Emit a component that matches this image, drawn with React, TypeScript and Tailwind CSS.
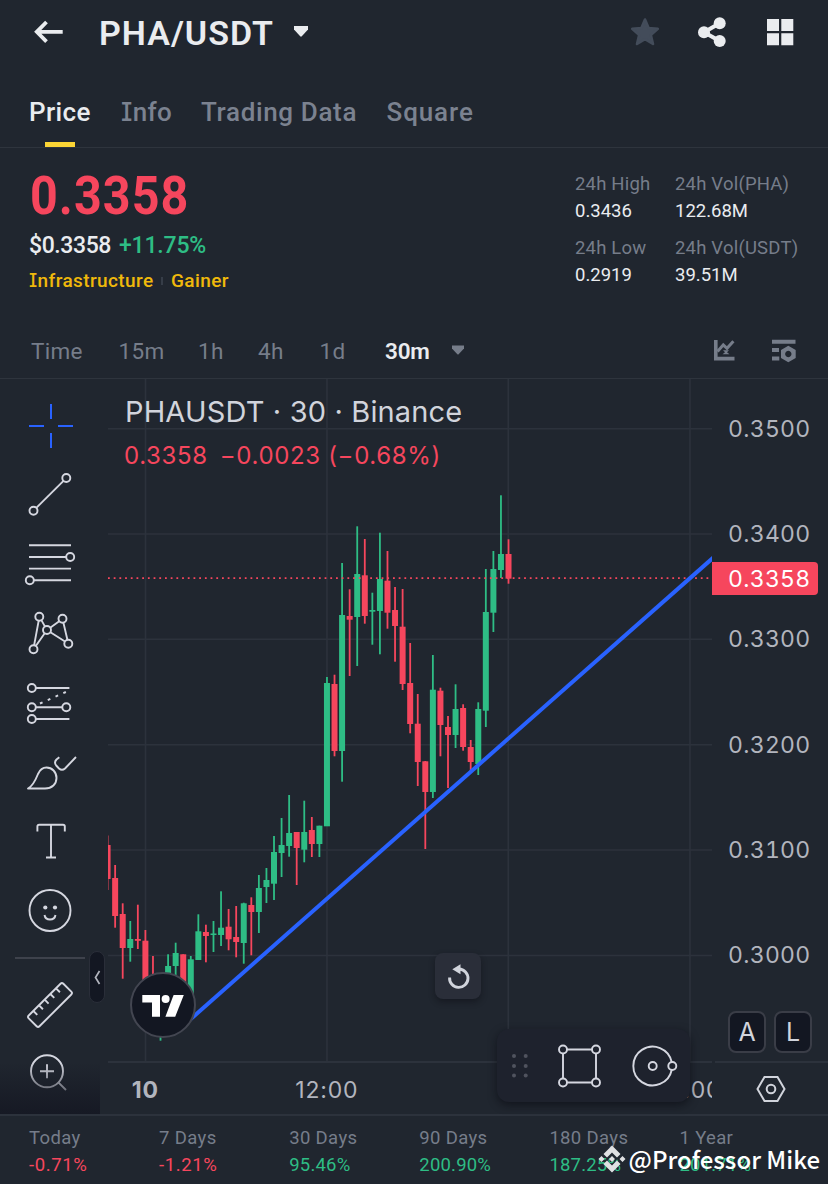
import React from "react";

type Candle = [up: 0 | 1, high: number, low: number, top: number, bottom: number];

const FIRST = -5;
const STEP = 7.565;
const CANDLES: Candle[] = [
  [0, 835.5, 890, 845, 879],
  [0, 865, 927.7, 878, 916],
  [0, 903.3, 978.7, 914, 948],
  [1, 921, 961.7, 939, 948],
  [0, 904.7, 949, 939, 940.8],
  [0, 930, 990, 940.7, 985],
  [0, 956, 1010, 985, 1000],
  [1, 995, 1040.7, 997, 1005],
  [1, 954.3, 1000, 966, 998],
  [1, 942.7, 975, 953, 966],
  [0, 954.3, 992, 954.3, 990],
  [1, 956, 994, 959.3, 994],
  [1, 914.3, 960, 931.3, 960],
  [0, 924.7, 962.3, 932, 936],
  [1, 921, 952, 933.5, 935],
  [1, 891.3, 946, 927.7, 935],
  [0, 909, 950.3, 926.7, 939.3],
  [0, 906, 957.3, 937, 942],
  [1, 902.7, 963.7, 903.3, 943],
  [0, 897.3, 955.3, 905, 912],
  [1, 875, 933, 888, 912],
  [1, 868, 903, 880, 887],
  [1, 836, 900, 852, 883.7],
  [1, 818, 877, 845, 853],
  [1, 795, 856.7, 833, 846],
  [0, 832, 885, 832, 848],
  [1, 800.7, 862.3, 832, 849.7],
  [0, 817, 857, 830, 844],
  [1, 825.7, 857, 825.7, 844],
  [1, 677, 826, 683, 826.3],
  [0, 674.7, 756.3, 684, 751],
  [1, 563, 781.7, 615, 751],
  [0, 589.3, 676, 616, 619.7],
  [1, 526.3, 666, 574, 617],
  [0, 539, 623.7, 575.3, 616],
  [1, 592.7, 644.7, 610, 611.7],
  [1, 532.7, 654.3, 579, 611],
  [0, 551, 628.7, 580.7, 612.7],
  [0, 587, 661.7, 610, 626],
  [0, 589, 690, 626.7, 684],
  [0, 643, 733.3, 683, 724],
  [0, 694, 786, 723.7, 762],
  [0, 761, 849, 761.3, 792],
  [1, 655, 798, 689.7, 792],
  [0, 687.7, 756.3, 690.7, 725],
  [0, 716, 788, 727, 735],
  [1, 684.3, 748, 709, 735],
  [0, 704.3, 750.7, 708, 747],
  [0, 740, 772, 747, 762],
  [1, 702.3, 775, 709, 764],
  [1, 569, 727, 612, 710.7],
  [1, 551, 632, 569, 612.7],
  [1, 495.3, 578, 554, 570],
  [0, 539.3, 583.7, 554, 578.7],
];

const GRID_Y = [428.7, 534, 639.3, 744.7, 850, 955.5];
const GRID_X = [145.5, 327, 508.3, 690];

const GREEN = "#2ebd85";
const RED = "#f6465d";

function CandleChart() {
  return (
    <svg width="604" height="682" viewBox="108 379 604 682" className="block">
      <g stroke="#2c323c" strokeWidth="1.6">
        {GRID_Y.map((y) => (
          <path key={y} d={`M108 ${y}H712`} />
        ))}
        {GRID_X.map((x) => (
          <path key={x} d={`M${x} 379V1061`} />
        ))}
      </g>
      {CANDLES.map(([up, high, low, top, bottom], i) => {
        const x = 145.4 + (FIRST + i) * STEP;
        const fill = up ? GREEN : RED;
        return (
          <g key={i} fill={fill}>
            <rect x={x - 0.9} y={high} width="1.8" height={low - high} />
            <rect x={x - 3} y={top} width="6" height={bottom - top} />
          </g>
        );
      })}
      <path d="M108 578.2H712" stroke={RED} strokeWidth="1.7" strokeDasharray="1.8 3.9" />
      <path d="M180 1028.5L714 557" stroke="#2962ff" strokeWidth="4" />
    </svg>
  );
}

function Tool({ y, children }: { y: number; children: React.ReactNode }) {
  return (
    <svg
      width="60"
      height="70"
      viewBox={`20 ${y} 60 70`}
      fill="none"
      stroke="#d5d7e0"
      strokeWidth="1.9"
      strokeLinejoin="round"
      className="ml-5 block shrink-0"
    >
      {children}
    </svg>
  );
}

function Toolbar() {
  return (
    <div className="relative flex h-[735px] w-[100px] shrink-0 flex-col pt-3">
      <Tool y={391}>
        <path d="M51 404v15M51 433v15M29 426h15M58 426h15" stroke="#2962ff" strokeWidth="2" />
      </Tool>
      <Tool y={461}>
        <circle cx="66.3" cy="478" r="4" />
        <circle cx="33.5" cy="510.7" r="4" />
        <path d="M63.5 480.8L36.3 507.9" />
      </Tool>
      <Tool y={531}>
        <path d="M29 545.2H71M29 557H66M29 568.6H71M34 580.2H71" />
        <circle cx="70.2" cy="557" r="4" />
        <circle cx="29.8" cy="580.2" r="4" />
      </Tool>
      <Tool y={601}>
        <circle cx="39.3" cy="616.7" r="4" />
        <circle cx="62.5" cy="618.7" r="4" />
        <circle cx="47" cy="630" r="4" />
        <circle cx="33.5" cy="649.3" r="4" />
        <circle cx="68.3" cy="643.7" r="4" />
        <path d="M38.7 620.6L34.1 645.4M41.4 620.1L45 626.6M44.7 633.3L35.8 646M50.2 627.7L59.2 621.2M50.4 632.2L65 641.5M63.4 622.6L67.4 639.7" />
      </Tool>
      <Tool y={671}>
        <circle cx="31.8" cy="688" r="4" />
        <circle cx="31.8" cy="707.3" r="4" />
        <circle cx="66.3" cy="707.3" r="4" />
        <circle cx="31.8" cy="719" r="4" />
        <path d="M35.8 688H69.4M35.8 707.3H62.3M35.8 719H69.4" />
        <path d="M40 703.5L67 691.5" strokeWidth="2" strokeDasharray="2.8 5.7" />
      </Tool>
      <Tool y={741}>
        <path d="M28 788.5C33 786 36 779 38 774C40 769.5 43 767.5 46.5 767.5C52 767.5 56.5 772 56.5 778C56.5 784 52 788.5 45 788.5Z" />
        <path d="M59.3 757.3L56.5 759.5C54.6 761.5 54.6 763.5 56.2 765.5L59 768.5C61 770.3 63 770.3 65 768.5L76 757" />
      </Tool>
      <Tool y={811}>
        <path d="M37.4 831.5V826.5Q37.4 824.7 39.2 824.7H63Q64.8 824.7 64.8 826.5V831.5M51 824.7V857.5M46 857.5H56" />
      </Tool>
      <Tool y={881}>
        <circle cx="50" cy="910.5" r="20.5" />
        <path d="M44.5 915C45.5 921 54.5 921 55.5 915" />
        <g fill="#d5d7e0" stroke="none">
          <circle cx="45.3" cy="907.5" r="2.1" />
          <circle cx="55" cy="907.5" r="2.1" />
        </g>
      </Tool>
      <div className="mt-1.5 mb-[11px] ml-[15px] h-0.5 w-[70px] shrink-0 bg-[#3e424c]" />
      <Tool y={970}>
        <g transform="translate(50 1005) rotate(-45)">
          <rect x="-24.5" y="-7.6" width="49" height="15.2" rx="2" />
          <path d="M-16 -7.5v5.5M-8 -7.5v5.5M0 -7.5v5.5M8 -7.5v5.5M16 -7.5v5.5" />
        </g>
      </Tool>
      <Tool y={1040}>
        <circle cx="47" cy="1071.3" r="16" />
        <path d="M40 1071.3H54M47 1064.3V1078.3M58.3 1082.3L66 1090" />
      </Tool>
      <div className="absolute bottom-0 left-0 h-[52px] w-[100px] bg-linear-to-b from-[#161924]/0 to-[#161924]" />
      <div className="absolute top-[572px] left-[89px] z-10 flex h-[52px] w-4 items-center justify-center rounded-full border border-[#2a2e39] bg-[#131722]">
        <svg width="7" height="15" viewBox="0 0 7 15" fill="none" stroke="#b2b5be" strokeWidth="1.7">
          <path d="M5.5 1L1.5 7.5L5.5 14" />
        </svg>
      </div>
    </div>
  );
}

function ChartPane() {
  return (
    <div className="relative h-[735px] w-[604px] shrink-0 overflow-hidden">
      <CandleChart />
      <div className="h-0.5 bg-[#2c323c]" />
      <div className="-ml-[53.5px] flex h-[51px] items-center pt-[3px] font-['Inter',sans-serif] text-[23px] tracking-[0.8px] text-[#b2b5be]">
        <span className="w-[181.5px] shrink-0 text-center font-bold">10</span>
        <span className="w-[181.5px] shrink-0 text-center">12:00</span>
        <span className="w-[181.5px] shrink-0 text-center">11</span>
        <span className="w-[181.5px] shrink-0 text-center">12:00</span>
      </div>

      <div className="absolute top-[15px] left-[17px] font-['Inter',sans-serif] whitespace-nowrap">
        <div className="text-[29px] leading-9 tracking-[0.15px] text-[#d1d4dc]">PHAUSDT · 30 · Binance</div>
        <div className="mt-2 -ml-px flex gap-3 text-[24px] leading-9 tracking-[0.65px] text-[#f6465d]">
          <span>0.3358</span>
          <span>−0.0023 (−0.68%)</span>
        </div>
      </div>

      <div className="absolute top-[593px] left-[22px] size-[66px] rounded-full border-2 border-[#434651] bg-[#131722]">
        <svg width="62" height="62" viewBox="132 974 62 62" fill="#fff">
          <path d="M142.3 995H160V1016.7H152V1002.5H142.3Z" />
          <circle cx="165.6" cy="999" r="4" />
          <path d="M173.6 995H183.8L175.2 1016.7H165.4Z" />
        </svg>
      </div>

      <div className="absolute top-[574px] left-[327px] size-[46px] rounded-lg bg-[#2a2e39] shadow-[0_3px_6px_rgba(10,12,18,0.45)]">
        <svg width="46" height="46" viewBox="435 953 46 46">
          <path d="M449.6 977.5A9.2 9.2 0 1 0 459 969" fill="none" stroke="#d1d4dc" strokeWidth="2.9" />
          <path d="M452.3 969.3L460.5 964.2V974.3Z" fill="#d1d4dc" />
        </svg>
      </div>
    </div>
  );
}

function DrawingPalette() {
  return (
    <div className="absolute top-[650px] left-[497px] z-10 h-[73px] w-[193px] rounded-xl bg-[#1e222d] shadow-[0_3px_8px_rgba(8,10,16,0.6)]">
      <svg width="193" height="73" viewBox="497 1029 193 73" fill="none" stroke="#d5d7e0" strokeWidth="1.9">
        <g fill="#50535e" stroke="none">
          <circle cx="514" cy="1056" r="2" />
          <circle cx="525.7" cy="1056" r="2" />
          <circle cx="514" cy="1066" r="2" />
          <circle cx="525.7" cy="1066" r="2" />
          <circle cx="514" cy="1075.5" r="2" />
          <circle cx="525.7" cy="1075.5" r="2" />
        </g>
        <circle cx="563" cy="1049.5" r="4" />
        <circle cx="596" cy="1049.5" r="4" />
        <circle cx="563" cy="1082.5" r="4" />
        <circle cx="596" cy="1082.5" r="4" />
        <path d="M567 1049.5H592M567 1082.5H592M563 1053.5V1078.5M596 1053.5V1078.5" />
        <circle cx="652.7" cy="1066" r="4" />
        <circle cx="672.3" cy="1066" r="4" />
        <path d="M671.7 1062A19.4 19.4 0 1 0 671.7 1070" />
      </svg>
    </div>
  );
}

function PriceAxis() {
  return (
    <div className="relative h-[735px] w-[116px] shrink-0 font-['Inter',sans-serif] text-[23px] text-[#b2b5be] tabular-nums">
      <div className="flex h-[682px] flex-col overflow-hidden pl-4 tracking-[0.3px]">
        {["0.3500", "0.3400", "0.3300", "0.3200", "0.3100", "0.3000"].map((p, i) => (
          <div key={p} className={`flex h-[105.3px] shrink-0 items-center ${i === 0 ? "-mt-[2.6px]" : ""}`}>
            {p}
          </div>
        ))}
        <div className="mt-[3px] flex gap-2 text-[#d1d4dc]">
          <div className="flex h-[42px] w-[38px] items-center justify-center rounded-lg border-2 border-[#3a3d47] bg-[#131722] pt-px text-[25px] tracking-normal">A</div>
          <div className="flex h-[42px] w-[38px] items-center justify-center rounded-lg border-2 border-[#3a3d47] bg-[#131722] pt-px text-[25px] tracking-normal">L</div>
        </div>
      </div>
      <div className="ml-[3px] h-0.5 bg-[#2c323c]" />
      <svg width="30" height="28" viewBox="756 1075 30 28" fill="none" stroke="#d1d4dc" strokeWidth="2" className="mt-3 ml-11 block">
        <path d="M764.5 1077H777.5L784.5 1089L777.5 1101H764.5L757.5 1089Z" />
        <circle cx="771" cy="1089" r="4.3" />
      </svg>
      <div className="absolute top-[183px] left-0 flex h-[33px] w-[106px] items-center rounded-r bg-[#f6465d] pt-px pl-4 tracking-[0.3px] text-white">
        0.3358
      </div>
    </div>
  );
}

const STATS: [string, string, boolean][] = [
  ["Today", "-0.71%", false],
  ["7 Days", "-1.21%", false],
  ["30 Days", "95.46%", true],
  ["90 Days", "200.90%", true],
  ["180 Days", "187.25%", true],
  ["1 Year", "201.71%", true],
];

const INTERVALS: [string, string][] = [
  ["Time", "w-[87.5px]"],
  ["15m", "w-[79.5px]"],
  ["1h", "w-[60px]"],
  ["4h", "w-[61.5px]"],
  ["1d", "w-[65.5px]"],
];

function DayStat({ label, value }: { label: string; value: string }) {
  return (
    <div className="h-[63.5px] text-[18.5px]">
      <div className="leading-6 tracking-[0.2px] text-[#767d8a]">{label}</div>
      <div className="mt-[3px] leading-6 text-[#eaecef]">{value}</div>
    </div>
  );
}

export default function App() {
  return (
    <div className="relative flex h-[1184px] w-[828px] flex-col overflow-hidden bg-[#20262f] font-['Roboto',sans-serif] whitespace-nowrap">
      <header className="flex h-16 shrink-0 items-center pl-[34px]">
        <svg width="30" height="24" viewBox="0 0 30 24" fill="none" stroke="#eaecef" strokeWidth="3.8">
          <path d="M28.7 11.8H3M12.5 2L2.8 11.8L12.5 21.6" />
        </svg>
        <h1 className="ml-[35px] w-[193px] pt-0.5 text-[34px] leading-[62px] font-semibold tracking-[1px] text-[#eaecef]">PHA/USDT</h1>
        <svg width="18" height="12" viewBox="0 0 18 12" fill="#eaecef">
          <path d="M2 0H16V3.5L9.8 10.3Q9 11 8.2 10.3L2 3.5Z" />
        </svg>
        <svg width="170" height="34" viewBox="628 15 170 34" className="ml-[318px] shrink-0">
          <path
            d="M645 19.5L648.6 28L657.8 28.8L650.8 34.9L653 44L645 39.2L637 44L639.2 34.9L632.2 28.8L641.4 28Z"
            fill="#434c5a"
            stroke="#434c5a"
            strokeWidth="2.6"
            strokeLinejoin="round"
          />
          <g fill="#eaecef">
            <circle cx="719.7" cy="23.3" r="6" />
            <circle cx="704" cy="32.2" r="6" />
            <circle cx="719.7" cy="41" r="6" />
            <path d="M719.7 23.3L704 32.2L719.7 41" fill="none" stroke="#eaecef" strokeWidth="4" />
            <path d="M767 19h12v12h-12zM781.3 19h12v12h-12zM767 33.3h12v12h-12zM781.3 33.3h12v12h-12z" />
          </g>
        </svg>
      </header>

      <nav className="flex h-[84px] shrink-0 border-b border-[#2e343d] pl-[29px] text-[26px] leading-[96px] font-medium text-[#7b8290]">
        <div className="relative w-[92px] tracking-[0.4px] text-[#eaecef]">
          Price
          <div className="absolute bottom-0 left-4 h-[5px] w-[30px] bg-[#fcd535]" />
        </div>
        <div className="w-20 tracking-[0.3px]">
          <span className="font-['Inter',sans-serif] text-[25px] [font-feature-settings:'cv08']">I</span>nfo
        </div>
        <div className="w-[185.5px] tracking-[0.65px]">Trading Data</div>
        <div className="tracking-[0.9px]">Square</div>
      </nav>

      <section className="flex h-[176px] shrink-0 pl-[29px]">
        <div className="w-[546px] pt-5">
          <div className="-mt-px h-[56px] w-fit origin-left scale-x-[0.89] pl-px text-[54.5px] leading-[56px] font-bold tracking-[1.2px] text-[#f6465d]">0.3358</div>
          <div className="mt-[9px] flex gap-2 text-[23px] leading-7 font-medium">
            <span className="w-[82px] tracking-[-0.4px] text-[#eaecef]">$0.3358</span>
            <span className="tracking-[-0.2px] text-[#2ebd85]">+11.75%</span>
          </div>
          <div className="mt-[9px] flex items-center text-[19px] leading-6 font-medium tracking-[0.4px] text-[#f0b90b]">
            <span className="w-[132px]">
              <span className="font-['Inter',sans-serif] text-[18px] [font-feature-settings:'cv08']">I</span>nfrastructure
            </span>
            <span className="mr-2 h-2 w-0.5 bg-[#363d48]" />
            <span>Gainer</span>
          </div>
        </div>
        <div className="w-[100px] pt-6">
          <DayStat label="24h High" value="0.3436" />
          <DayStat label="24h Low" value="0.2919" />
        </div>
        <div className="pt-6">
          <DayStat label="24h Vol(PHA)" value="122.68M" />
          <DayStat label="24h Vol(USDT)" value="39.51M" />
        </div>
      </section>

      <div className="flex h-[55px] shrink-0 items-center border-b border-[#2e343d] pl-[31px] text-[22.5px] tracking-[0.3px] text-[#767d8a]">
        {INTERVALS.map(([label, width]) => (
          <span key={label} className={`pt-0.5 ${width}`}>
            {label}
          </span>
        ))}
        <span className="w-[65.5px] pt-0.5 font-semibold tracking-[-0.2px] text-[#eaecef]">30m</span>
        <svg width="14" height="11" viewBox="0 0 14 11" fill="#767d8a" className="mb-0.5">
          <path d="M1 0.5H13V3.5L7.6 9.2Q7 9.8 6.4 9.2L1 3.5Z" />
        </svg>
        <svg width="90" height="26" viewBox="710 337 90 26" fill="#767d8a" className="mb-0.5 ml-[245px]">
          <path d="M714 340H717.6V356.8H734.5V360.6H714Z" />
          <path d="M717.5 351.5L723.3 344.8L727 348.3L733.4 341.3" fill="none" stroke="#767d8a" strokeWidth="3" />
          <path d="M723 350.3H729L727 352.2L729.5 354.3H722.5L725 352.2Z" />
          <path d="M772 339.8H795.5V343.8H772ZM772 348H779V352H772ZM772 356.4H779.3V360.4H772Z" />
          <path fillRule="evenodd" d="M788.3 345.8L795.7 350V358L788.3 362.2L781 358V350ZM788.3 350.8a3.2 3.2 0 1 0 0.01 0Z" />
        </svg>
      </div>

      <main className="relative flex h-[735px] shrink-0">
        <Toolbar />
        <div className="w-2 shrink-0" />
        <ChartPane />
        <PriceAxis />
        <DrawingPalette />
      </main>

      <footer className="flex h-[70px] shrink-0 border-t-2 border-[#2c323c] pt-2.5 pl-[29px] text-[18.5px] leading-6">
        {STATS.map(([label, value, up]) => (
          <div key={label} className="w-[130.1px] shrink-0">
            <div className="tracking-[0.35px] text-[#767d8a]">{label}</div>
            <div className={`mt-[3px] ${up ? "tracking-[0.2px] text-[#2ebd85]" : "tracking-[0.6px] text-[#f6465d]"}`}>{value}</div>
          </div>
        ))}
      </footer>

      <div className="absolute right-2 bottom-2 z-20 flex items-center gap-[3px] text-white">
        <svg width="28" height="30" viewBox="597 1145 28 30" fill="#dfe0e2">
          <path d="M611 1146.5L619.5 1155L616 1158.5L611 1153.5L606 1158.5L602.5 1155Z" />
          <path d="M611 1173.5L619.5 1165L616 1161.5L611 1166.5L606 1161.5L602.5 1165Z" />
          <path d="M611 1157L614 1160L611 1163L608 1160ZM600.5 1157L603.5 1160L600.5 1163L597.5 1160ZM621.5 1157L624.5 1160L621.5 1163L618.5 1160Z" />
        </svg>
        <span className="font-['Noto_Sans_CJK_SC',sans-serif] text-[24px] leading-[34px] font-medium">@Professor Mike</span>
      </div>
    </div>
  );
}
